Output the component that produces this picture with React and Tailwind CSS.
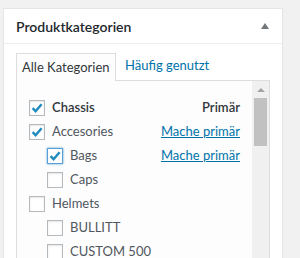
const items = [
  { name: "Chassis", level: 0, checked: true, primary: "is" },
  { name: "Accesories", level: 0, checked: true, primary: "make" },
  { name: "Bags", level: 1, checked: true, primary: "make", focus: true },
  { name: "Caps", level: 1, checked: false },
  { name: "Helmets", level: 0, checked: false },
  { name: "BULLITT", level: 1, checked: false },
  { name: "CUSTOM 500", level: 1, checked: false },
];

const Checkbox = ({ checked, focus }) => (
  <span
    className={
      "flex h-4 w-4 shrink-0 items-center justify-center border bg-white " +
      (focus
        ? "border-[#5b9dd9] shadow-[0_0_2px_rgba(30,140,190,0.8)]"
        : "border-[#b4b9be] shadow-[inset_0_1px_2px_rgba(0,0,0,0.1)]")
    }
  >
    {checked && (
      <svg width="14" height="14" viewBox="0 0 14 14">
        <path
          d="M2.6 7.2 L5.6 10.2 L11.6 3.2"
          fill="none"
          stroke="#1e8cbe"
          strokeWidth="2.4"
        />
      </svg>
    )}
  </span>
);

const App = () => {
  return (
    <div className="h-[258px] w-[300px] overflow-hidden bg-[#f1f1f1] pl-[3px] pt-2 font-['Lato','Liberation_Sans',sans-serif] text-[13px] text-[#50575e]">
      <div className="h-[300px] w-[280px] border border-[#e5e5e5] bg-white">
        <div className="flex h-[35px] items-center justify-between border-b border-[#eee] pl-3 pr-[13px]">
          <h2 className="text-[14px] font-semibold text-[#23282d]">Produktkategorien</h2>
          <span className="h-0 w-0 border-x-4 border-b-[6px] border-x-transparent border-b-[#72777c]" />
        </div>

        <div className="px-3 pt-2">
          <div className="flex items-end">
            <div className="relative z-10 -mb-px flex h-7 w-[100px] items-center border border-b-0 border-[#ddd] bg-[#fdfdfd] pl-[5px] text-[#32373c]">
              Alle Kategorien
            </div>
            <a className="ml-[9px] flex h-7 items-center text-[#0073aa]">Häufig genutzt</a>
          </div>

          <div className="flex h-[200px] w-[254px] border border-[#ddd] bg-[#fdfdfd]">
            <ul className="flex-1 pl-3 pr-3 pt-[15px]">
              {items.map((it) => (
                <li key={it.name} className="flex h-6 items-center justify-between">
                  <label
                    className={
                      "flex items-center gap-[7px] " + (it.level === 1 ? "pl-[18px]" : "")
                    }
                  >
                    <Checkbox checked={it.checked} focus={it.focus} />
                    <span className={it.primary === "is" ? "font-semibold text-[#32373c]" : ""}>
                      {it.name}
                    </span>
                  </label>
                  {it.primary === "is" && (
                    <span className="font-semibold text-[#32373c]">Primär</span>
                  )}
                  {it.primary === "make" && (
                    <a className="text-[#0073aa] underline">Mache primär</a>
                  )}
                </li>
              ))}
            </ul>
            <div className="flex w-[17px] flex-col items-center bg-[#f0f0f0]">
              <div className="flex h-[17px] items-center justify-center">
                <span className="h-0 w-0 border-x-[4px] border-b-[4px] border-x-transparent border-b-[#a3a3a3]" />
              </div>
              <div className="h-[48px] w-[13px] bg-[#c1c1c1]" />
            </div>
          </div>
        </div>
      </div>
    </div>
  );
};

export default App;
